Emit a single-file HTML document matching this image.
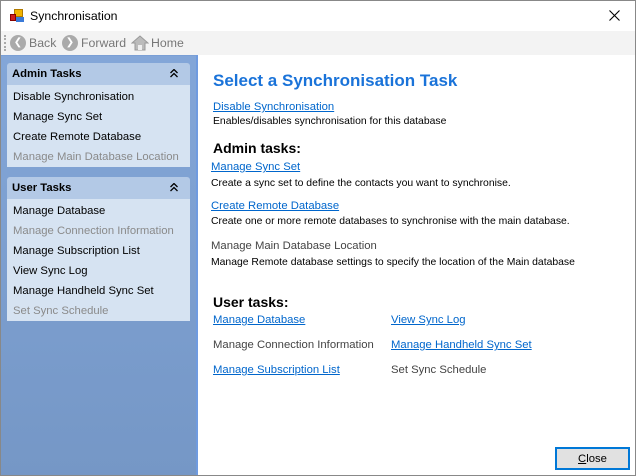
<!DOCTYPE html>
<html><head><style>
*{margin:0;padding:0;box-sizing:border-box}
body{width:636px;height:476px;overflow:hidden;font-family:"Liberation Sans",sans-serif;font-size:11.3px;line-height:16px;background:#fff;position:relative;color:#000}
.a{position:absolute;white-space:nowrap}
.l{color:#0066cc;text-decoration:underline}
.g{color:#444}
.d{color:#8a8a8a}
.b{font-weight:bold;font-size:14px;line-height:normal}
.s{font-size:10.4px}
</style></head><body>
<div class="a" style="left:0;top:0;width:636px;height:476px;border:1px solid #888"></div>
<div class="a" style="left:10px;top:9px;width:14px;height:14px">
<div class="a" style="left:4px;top:0;width:9px;height:8px;background:#f2b400;border:1px solid #b07a00"></div>
<div class="a" style="left:0;top:5px;width:6px;height:7px;background:#d02020;border:1px solid #800"></div>
<div class="a" style="left:6px;top:8px;width:8px;height:5px;background:#3a7ad8"></div>
</div>
<div class="a" style="left:30px;top:8px;font-size:12.3px">Synchronisation</div>
<svg class="a" style="left:609px;top:10px" width="11" height="11"><path d="M0.5 0.5L10.5 10.5M10.5 0.5L0.5 10.5" stroke="#000" stroke-width="1.1"/></svg>
<div class="a" style="left:1px;top:31px;width:634px;height:24px;background:#f3f3f3"></div>
<div class="a" style="left:4px;top:35px;width:2px;height:16px;border-left:2px dotted #aaa"></div>
<div class="a" style="left:10px;top:35px;width:16px;height:16px;border-radius:50%;background:#aaa;color:#fff;font-size:10px;text-align:center;line-height:16px">&#10094;</div>
<div class="a" style="left:29px;top:35px;font-size:12.3px;color:#777">Back</div>
<div class="a" style="left:62px;top:35px;width:16px;height:16px;border-radius:50%;background:#aaa;color:#fff;font-size:10px;text-align:center;line-height:16px">&#10095;</div>
<div class="a" style="left:81px;top:35px;font-size:12.3px;color:#777">Forward</div>
<svg class="a" style="left:131px;top:35px" width="18" height="16"><path d="M1 8L9 1L17 8H14V15H4V8Z" fill="#bbb" stroke="#999"/><rect x="7" y="10" width="4" height="5" fill="#eee"/></svg>
<div class="a" style="left:151px;top:35px;font-size:12.3px;color:#777">Home</div>
<div class="a" style="left:1px;top:55px;width:196px;height:420px;background:linear-gradient(#83a6d8,#7597c6);border-top:1px solid #7a9fd6"></div>
<div class="a" style="left:196px;top:55px;width:2px;height:420px;background:#6f9be0"></div>
<div class="a" style="left:7px;top:63px;width:183px;height:22px;background:#b3c9e6;border-radius:3px 3px 0 0"></div>
<div class="a" style="left:12px;top:66px;font-weight:bold">Admin Tasks</div>
<svg class="a" style="left:170px;top:69px" width="8" height="9"><path d="M0.5 4L4 0.5L7.5 4M0.5 8L4 4.5L7.5 8" fill="none" stroke="#000" stroke-width="1.3"/></svg>
<div class="a" style="left:7px;top:85px;width:183px;height:82px;background:#d6e3f2"></div>
<div class="a" style="left:13px;top:89px">Disable Synchronisation</div>
<div class="a" style="left:13px;top:109px">Manage Sync Set</div>
<div class="a" style="left:13px;top:129px">Create Remote Database</div>
<div class="a d" style="left:13px;top:149px">Manage Main Database Location</div>
<div class="a" style="left:7px;top:177px;width:183px;height:22px;background:#b3c9e6;border-radius:3px 3px 0 0"></div>
<div class="a" style="left:12px;top:180px;font-weight:bold">User Tasks</div>
<svg class="a" style="left:170px;top:183px" width="8" height="9"><path d="M0.5 4L4 0.5L7.5 4M0.5 8L4 4.5L7.5 8" fill="none" stroke="#000" stroke-width="1.3"/></svg>
<div class="a" style="left:7px;top:199px;width:183px;height:122px;background:#d6e3f2"></div>
<div class="a" style="left:13px;top:203px">Manage Database</div>
<div class="a d" style="left:13px;top:223px">Manage Connection Information</div>
<div class="a" style="left:13px;top:243px">Manage Subscription List</div>
<div class="a" style="left:13px;top:263px">View Sync Log</div>
<div class="a" style="left:13px;top:283px">Manage Handheld Sync Set</div>
<div class="a d" style="left:13px;top:303px">Set Sync Schedule</div>
<div class="a" style="left:213px;top:71px;font-size:17px;line-height:normal;font-weight:bold;color:#1a73d9">Select a Synchronisation Task</div>
<div class="a l" style="left:213px;top:99px">Disable Synchronisation</div>
<div class="a s" style="left:213px;top:114px">Enables/disables synchronisation for this database</div>
<div class="a b" style="left:213px;top:140px">Admin tasks:</div>
<div class="a l" style="left:211px;top:159px">Manage Sync Set</div>
<div class="a s" style="left:211px;top:176px">Create a sync set to define the contacts you want to synchronise.</div>
<div class="a l" style="left:211px;top:198px">Create Remote Database</div>
<div class="a s" style="left:211px;top:214px">Create one or more remote databases to synchronise with the main database.</div>
<div class="a g" style="left:211px;top:238px">Manage Main Database Location</div>
<div class="a s" style="left:211px;top:255px">Manage Remote database settings to specify the location of the Main database</div>
<div class="a b" style="left:213px;top:294px">User tasks:</div>
<div class="a l" style="left:213px;top:312px">Manage Database</div>
<div class="a g" style="left:213px;top:337px">Manage Connection Information</div>
<div class="a l" style="left:213px;top:362px">Manage Subscription List</div>
<div class="a l" style="left:391px;top:312px">View Sync Log</div>
<div class="a l" style="left:391px;top:337px">Manage Handheld Sync Set</div>
<div class="a g" style="left:391px;top:362px">Set Sync Schedule</div>
<div class="a" style="left:555px;top:447px;width:75px;height:23px;background:#e1e1e1;border:2px solid #0078d7;text-align:center;line-height:20px;font-size:11.3px"><u>C</u>lose</div>
</body></html>
